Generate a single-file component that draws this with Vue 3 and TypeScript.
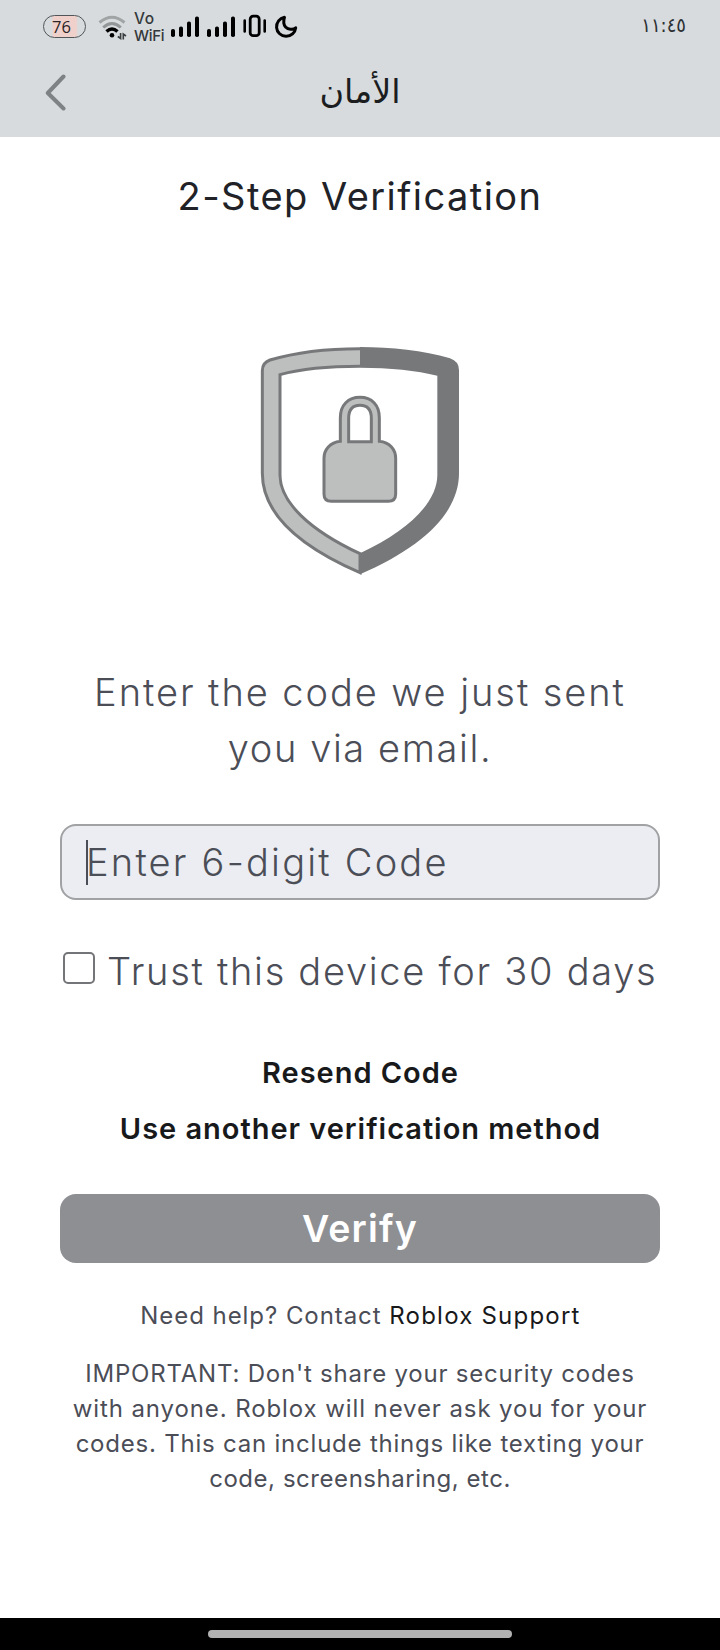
<script setup lang="ts">
import { ref } from 'vue'

const code = ref('')
const trusted = ref(false)
const signals = [1, 2]
const notice = [
  { id: 'n1', text: "IMPORTANT: Don't share your security codes" },
  { id: 'n2', text: 'with anyone. Roblox will never ask you for your' },
  { id: 'n3', text: 'codes. This can include things like texting your' },
  { id: 'n4', text: 'code, screensharing, etc.' },
]
</script>

<template>
  <div class="screen">
    <header class="top">
      <div class="status">
        <div class="status-icons">
          <span class="battery"><span>76</span></span>
          <svg class="wifi" width="29" height="26" viewBox="0 0 29 26" fill="none">
            <path d="M1.500 7.500Q14 -3 26.500 7.500" stroke="#a0a4a5" stroke-width="3" />
            <path d="M5.200 12.500Q14 4.500 22.800 12.500" stroke="#929697" stroke-width="3" />
            <path d="M8.500 16.500Q14 11.500 19.500 16.500" stroke="#000" stroke-width="3.400" />
            <circle cx="14" cy="20.300" r="2.300" fill="#000" />
            <path d="M19.800 21.500 22.600 23.500V18M25.300 24.500V19L28 21" stroke="#3a3d3e" stroke-width="1.600" />
          </svg>
          <span class="vowifi"><span class="vo">Vo</span><span class="wf">WiFi</span></span>
          <svg v-for="s in signals" :key="s" :class="['signal', 'signal-' + s]" width="29" height="22" viewBox="0 0 29 22">
            <rect x="0" y="13" width="4" height="8" rx="1.800" />
            <rect x="8" y="10.500" width="4" height="10.500" rx="1.800" />
            <rect x="16" y="5.500" width="4" height="15.500" rx="1.800" />
            <rect x="24" y="0.500" width="4" height="20.500" rx="1.800" />
          </svg>
          <svg class="vibrate" width="24" height="24" viewBox="0 0 24 24" fill="none" stroke="#000" stroke-linecap="round">
            <rect x="7.200" y="2.200" width="9" height="19.500" rx="3" stroke-width="2.800" />
            <path d="M1.700 6.500V17.500M21.700 6.500V17.500" stroke-width="2.600" />
          </svg>
          <svg class="moon" width="24" height="24" viewBox="0 0 24 24" fill="none">
            <path d="M10.500 2.300A9.600 9.600 0 1 0 21.700 12.800Q20 14.500 16.500 14.200Q10.500 13.500 9.800 8Q9.700 4.500 10.500 2.300Z" stroke="#000" stroke-width="3" stroke-linejoin="round" />
          </svg>
        </div>
        <span class="clock">١١:٤٥</span>
      </div>
      <div class="titlebar">
        <svg class="back" width="22" height="38" viewBox="0 0 22 38" fill="none">
          <path d="M18.500 2.500 2.800 19 18.500 34.500" stroke="#7e8284" stroke-width="4" stroke-linecap="round" stroke-linejoin="round" />
        </svg>
        <h1 lang="ar" dir="rtl">الأمان</h1>
      </div>
    </header>

    <main class="content">
      <h2>2-Step Verification</h2>

      <svg class="shield" width="220" height="250" viewBox="0 0 660 750">
        <path d="M330 41C235 41 140 51 60 75Q37 83 37 107V415C37 538 150 635 330 713V656C180 586 90 502 90 420V119C160 100 240 94 330 94" fill="#bcbfbe" stroke="#77787a" stroke-width="9" />
        <path d="M330 36C425 36 520 46 600 70Q627 79 627 106V415C627 535 515 638 330 718V655C478 586 562 500 562 420V122C500 106 420 98 330 98Z" fill="#77787a" />
        <path d="M271 319V248C271 210 295 187 330 187S388 210 388 248V319C420 322 437 345 437 370V477Q437 499 415 499H244Q222 499 222 477V370C222 345 240 322 271 319Z" fill="#bcbfbe" stroke="#77787a" stroke-width="9" />
        <path d="M296 320V250Q296 211 330 211T364 250V320Z" fill="#fff" stroke="#77787a" stroke-width="9" />
      </svg>

      <p class="lead"><span class="lead-1">Enter the code we just sent</span><span class="lead-2">you via email.</span></p>

      <div class="field">
        <i class="caret"></i>
        <input v-model="code" type="text" inputmode="numeric" maxlength="6" placeholder="Enter 6-digit Code" />
      </div>

      <label class="trust">
        <input v-model="trusted" type="checkbox" />
        <span>Trust this device for 30 days</span>
      </label>

      <button class="link resend" type="button">Resend Code</button>
      <button class="link method" type="button">Use another verification method</button>
      <button class="verify" type="button">Verify</button>

      <p class="help">Need help? Contact <a>Roblox Support</a></p>
      <p class="notice"><span v-for="line in notice" :key="line.id" :class="line.id">{{ line.text }}</span></p>
    </main>

    <footer class="navbar"><i></i></footer>
  </div>
</template>

<style>
body {
  margin: 0;
  background: #fff;
}
</style>

<style scoped>
.screen {
  display: flex;
  flex-direction: column;
  width: 720px;
  height: 1650px;
  overflow: hidden;
  background: #fff;
  color: #4b4d57;
  font-family: Inter, "Liberation Sans", sans-serif;
}
.screen * {
  box-sizing: border-box;
}
h1, h2, p {
  margin: 0;
  font-weight: 400;
}
.top {
  flex: none;
  height: 137px;
  background: #d7dbde;
}
.status {
  display: flex;
  justify-content: space-between;
  height: 54px;
  padding: 0 34px 0 43px;
}
.status-icons {
  display: flex;
  align-items: flex-start;
}
.status-icons > * {
  flex: none;
}
.battery {
  width: 43px;
  height: 23px;
  margin-top: 15px;
  border: 1.500px solid #515557;
  border-radius: 12px;
  background: linear-gradient(90deg, transparent 8px, #f0d0ca 9px, #f0d0ca 32px, transparent 34px);
  color: #2b2526;
  font: 400 16.500px/21px "Open Sans", sans-serif;
  padding-left: 8px;
}
.wifi {
  margin: 15px 0 0 12px;
}
.vowifi {
  display: flex;
  flex-direction: column;
  width: 44px;
  padding: 10px 0 0 7px;
  color: #34383a;
  font: 500 15.500px/17px Inter, sans-serif;
}
.vo {
  height: 17px;
  line-height: 18px;
  letter-spacing: 0.600px;
}
.wf {
  font-size: 15px;
  letter-spacing: -0.300px;
}
.signal {
  margin-top: 16px;
}
.signal-2 {
  margin-left: 7px;
}
.vibrate {
  margin: 14px 0 0 7px;
}
.moon {
  margin: 15px 0 0 7px;
}
.clock {
  padding-top: 10px;
  color: #2c3033;
  font: 400 20px/30px "DejaVu Sans Condensed", "DejaVu Sans", sans-serif;
  font-stretch: condensed;
}
.titlebar {
  display: grid;
  grid-template-columns: 75px 1fr 75px;
  height: 83px;
}
.back {
  margin: 20px 0 0 45px;
}
.titlebar h1 {
  padding-top: 16px;
  color: #1b1d1f;
  font: 400 33.500px/44px "DejaVu Sans", sans-serif;
  text-align: center;
}
.content {
  flex: 1;
  display: flex;
  flex-direction: column;
  align-items: center;
  white-space: nowrap;
}
h2 {
  height: 60px;
  margin-top: 29px;
  color: #202227;
  font-size: 38px;
  line-height: 60px;
  letter-spacing: 1.450px;
}
.shield {
  flex: none;
  margin-top: 109px;
}
.lead {
  display: flex;
  flex-direction: column;
  align-items: center;
  height: 112px;
  margin-top: 79px;
  font-size: 38px;
  font-weight: 300;
  line-height: 56px;
}
.lead-1 {
  letter-spacing: 1.940px;
}
.lead-2 {
  letter-spacing: 1.600px;
}
.field {
  position: relative;
  width: 600px;
  height: 76px;
  margin-top: 48px;
}
.caret {
  position: absolute;
  left: 26px;
  top: 16px;
  width: 2px;
  height: 45px;
  background: #4b4d57;
}
.field input {
  display: block;
  width: 600px;
  height: 76px;
  padding: 0 0 0 24px;
  border: 2px solid #a1a2a4;
  border-radius: 16px;
  outline: none;
  background: #ecedf2;
  font: 300 38px/72px Inter, sans-serif;
  letter-spacing: 2.200px;
}
.field input::placeholder {
  color: #4b4d57;
  opacity: 1;
}
.trust {
  display: flex;
  align-items: center;
  width: 594px;
  height: 56px;
  margin-top: 43px;
  font-size: 38px;
  font-weight: 300;
  letter-spacing: 1.710px;
}
.trust input {
  appearance: none;
  flex: none;
  width: 32px;
  height: 32px;
  margin: -6px 12px 0 0;
  border: 2px solid #747578;
  border-radius: 5px;
  background: #fff;
}
button {
  padding: 0;
  border: 0;
  background: none;
  font-family: inherit;
}
.link {
  height: 56px;
  padding-left: 1px;
  color: #18191b;
  font-size: 29px;
  font-weight: 600;
  line-height: 56px;
  letter-spacing: 0.970px;
}
.resend {
  margin-top: 46px;
}
.verify {
  width: 600px;
  height: 69px;
  margin-top: 37px;
  border-radius: 16px;
  background: #8e8f93;
  color: #fff;
  font-size: 37.500px;
  font-weight: 600;
  line-height: 69px;
  letter-spacing: 1.200px;
}
.help {
  height: 35px;
  margin-top: 35px;
  padding-left: 1px;
  font-size: 24px;
  line-height: 35px;
  letter-spacing: 0.940px;
}
.help a {
  color: #18191b;
  letter-spacing: 1.220px;
}
.notice {
  display: flex;
  flex-direction: column;
  align-items: center;
  margin-top: 23px;
  font-size: 24px;
  line-height: 35px;
}
.n1 {
  letter-spacing: 0.790px;
}
.n2 {
  letter-spacing: 0.900px;
}
.n3 {
  letter-spacing: 0.780px;
}
.n4 {
  letter-spacing: 0.550px;
}
.navbar {
  flex: none;
  display: flex;
  justify-content: center;
  height: 32px;
  padding-top: 12px;
  background: #000;
}
.navbar i {
  width: 304px;
  height: 8px;
  border-radius: 4px;
  background: #b1b1b1;
}
</style>
